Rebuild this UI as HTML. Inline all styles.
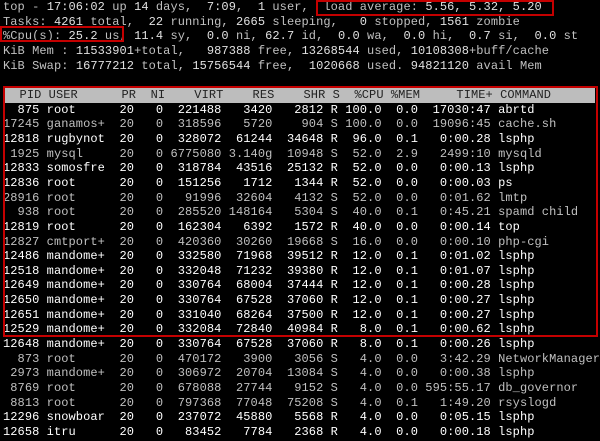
<!DOCTYPE html>
<html><head><meta charset="utf-8"><style>
html,body{margin:0;padding:0;background:#000;width:600px;height:441px;overflow:hidden}
pre{margin:0;position:absolute;left:3px;top:0;font-family:"Liberation Mono","DejaVu Sans Mono",monospace;font-size:12px;letter-spacing:0.08px;line-height:14.65px;color:#c0c0c0;white-space:pre}
b{color:#fff;font-weight:normal}
i{font-style:normal;color:#e0e0e0}
.h{display:inline-block;background:#bdbdbd;color:#222;width:590px;margin-left:2px;padding-left:0}
.box{position:absolute;border:2px solid #c40000;box-sizing:border-box}
</style></head><body>
<pre>top - <i>17:06:02</i> up <i>14</i> days,  <i>7:09</i>,  <i>1</i> user,  load average: <i>5.56, 5.32, 5.20</i>
Tasks: <i>4261</i> total,  <i>22</i> running, <i>2665</i> sleeping,   <i>0</i> stopped, <i>1561</i> zombie
%Cpu(s): <i>25.2</i> us, <i>11.4</i> sy,  <i>0.0</i> ni, <i>62.7</i> id,  <i>0.0</i> wa,  <i>0.0</i> hi,  <i>0.7</i> si,  <i>0.0</i> st
KiB Mem : <i>11533901</i>+total,   <i>987388</i> free, <i>13268544</i> used, <i>10108308</i>+buff/cache
KiB Swap: <i>16777212</i> total, <i>15756544</i> free,  <i>1020668</i> used. <i>94821120</i> avail Mem

<span class="h">  PID USER      PR  NI    VIRT    RES    SHR S  %CPU %MEM     TIME+ COMMAND</span>
<b>  875 root      20   0  221488   3420   2812 R 100.0  0.0  17030:47 abrtd</b>
17245 ganamos+  20   0  318596   5720    904 S 100.0  0.0  19096:45 cache.sh
<b>12818 rugbynot  20   0  328072  61244  34648 R  96.0  0.1   0:00.28 lsphp</b>
 1925 mysql     20   0 6775080 3.140g  10948 S  52.0  2.9   2499:10 mysqld
<b>12833 somosfre  20   0  318784  43516  25132 R  52.0  0.0   0:00.13 lsphp</b>
<b>12836 root      20   0  151256   1712   1344 R  52.0  0.0   0:00.03 ps</b>
28916 root      20   0   91996  32604   4132 S  52.0  0.0   0:01.62 lmtp
  938 root      20   0  285520 148164   5304 S  40.0  0.1   0:45.21 spamd child
<b>12819 root      20   0  162304   6392   1572 R  40.0  0.0   0:00.14 top</b>
12827 cmtport+  20   0  420360  30260  19668 S  16.0  0.0   0:00.10 php-cgi
<b>12486 mandome+  20   0  332580  71968  39512 R  12.0  0.1   0:01.02 lsphp</b>
<b>12518 mandome+  20   0  332048  71232  39380 R  12.0  0.1   0:01.07 lsphp</b>
<b>12649 mandome+  20   0  330764  68004  37444 R  12.0  0.1   0:00.28 lsphp</b>
<b>12650 mandome+  20   0  330764  67528  37060 R  12.0  0.1   0:00.27 lsphp</b>
<b>12651 mandome+  20   0  331040  68264  37500 R  12.0  0.1   0:00.27 lsphp</b>
<b>12529 mandome+  20   0  332084  72840  40984 R   8.0  0.1   0:00.62 lsphp</b>
<b>12648 mandome+  20   0  330764  67528  37060 R   8.0  0.1   0:00.26 lsphp</b>
  873 root      20   0  470172   3900   3056 S   4.0  0.0   3:42.29 NetworkManager
 2973 mandome+  20   0  306972  20704  13084 S   4.0  0.0   0:00.38 lsphp
 8769 root      20   0  678088  27744   9152 S   4.0  0.0 595:55.17 db_governor
 8813 root      20   0  797368  77048  75208 S   4.0  0.1   1:49.20 rsyslogd
<b>12296 snowboar  20   0  237072  45880   5568 R   4.0  0.0   0:05.15 lsphp</b>
<b>12658 itru      20   0   83452   7784   2368 R   4.0  0.0   0:00.18 lsphp</b></pre>
<div class="box" style="left:316px;top:0;width:238px;height:16px"></div>
<div class="box" style="left:0;top:26px;width:124px;height:16px"></div>
<div class="box" style="left:3px;top:86px;width:595px;height:251px"></div>
</body></html>
